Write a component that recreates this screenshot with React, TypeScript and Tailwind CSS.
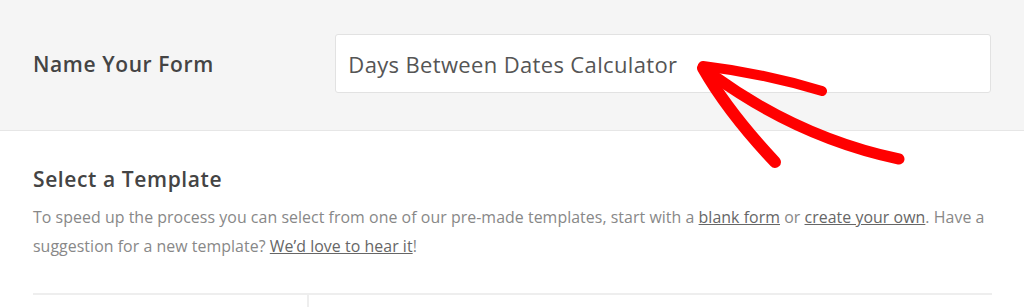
export default function App() {
  return (
    <div className="relative w-[1024px] h-[307px] overflow-hidden bg-white font-['Open_Sans',sans-serif]">
      <div className="h-[131px] bg-[#f5f5f5] border-b border-[#e6e6e6] flex items-start pt-[34px] px-[33px]">
        <div className="w-[303px] h-[59px] flex items-center pt-[2px] text-[21px] tracking-[0.6px] font-semibold text-[#444]">
          Name Your Form
        </div>
        <div className="w-[657px] h-[59px] bg-white border border-[#e2e2e2] rounded-[3px] flex items-center pt-[2px] px-[12px] text-[22px] tracking-[0.35px] text-[#555]">
          Days Between Dates Calculator
        </div>
      </div>

      <div className="px-[33px] pt-[33px]">
        <h2 className="text-[21px] leading-[30px] tracking-[0.6px] font-semibold text-[#444]">Select a Template</h2>
        <p className="mt-[9px] text-[15.9px] leading-[29px] tracking-[0.05px] text-[#888] w-[962px]">
          To speed up the process you can select from one of our pre-made templates, start with a{' '}
          <a className="underline text-[#666]">blank form</a> or{' '}
          <a className="underline text-[#666]">create your own</a>. Have a suggestion for a new template?{' '}
          <a className="underline text-[#666]">We’d love to hear it</a>!
        </p>
        <div className="mt-[32px] w-[959px] border-t-2 border-[#eeeeee] flex">
          <div className="w-[276px] h-[20px] border-r-2 border-[#eeeeee]" />
        </div>
      </div>

      <svg className="absolute left-0 top-0 pointer-events-none" width="1024" height="307" viewBox="0 0 1024 307">
        <g fill="none" stroke="#ff0000" strokeLinecap="round" strokeLinejoin="round">
          <path d="M703 66 Q762 73 822 91" strokeWidth="10" />
          <path d="M703 68 Q728 112 775 162" strokeWidth="12" />
          <path d="M714 76 Q800 138 899 159" strokeWidth="11" />
        </g>
      </svg>
    </div>
  )
}
